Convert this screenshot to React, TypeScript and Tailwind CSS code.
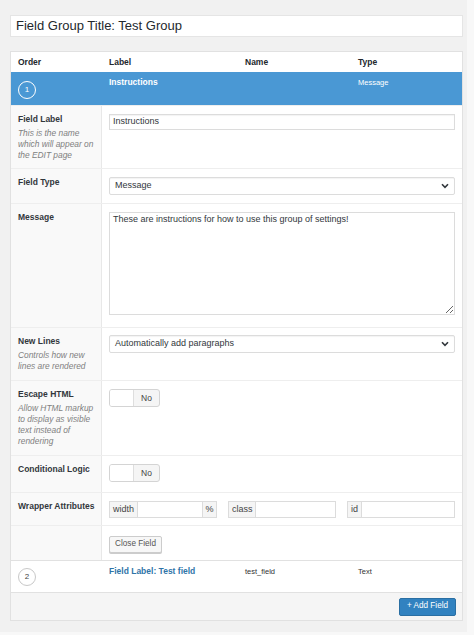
import React from "react";

const font = { fontFamily: '"Liberation Sans", Arial, sans-serif' };

function Chevron() {
  return (
    <svg width="8" height="6" viewBox="0 0 8 6" className="shrink-0">
      <path d="M1 1.2 L4 4.4 L7 1.2" fill="none" stroke="#32373c" strokeWidth="1.6" />
    </svg>
  );
}

function Select({ value }: { value: string }) {
  return (
    <div className="flex h-[18px] items-center justify-between rounded-[2px] border border-[#dcdcdc] bg-white pl-[5px] pr-[5px] text-[9px] text-[#32373c] shadow-[inset_0_1px_1px_rgba(0,0,0,0.05)]">
      <span>{value}</span>
      <Chevron />
    </div>
  );
}

function Toggle() {
  return (
    <div className="flex h-[18px] w-[51px] overflow-hidden rounded-[3px] border border-[#d4d4d4] bg-[#f5f5f5]">
      <div className="w-[24px] border-r border-[#dedede] bg-white" />
      <div className="flex flex-1 items-center justify-center text-[8.5px] text-[#444]">No</div>
    </div>
  );
}

function Row({
  label,
  desc,
  h,
  children,
}: {
  label?: string;
  desc?: string[];
  h: string;
  children: React.ReactNode;
}) {
  return (
    <div className={`flex border-t border-[#eeeeee] ${h}`}>
      <div className="w-[91px] shrink-0 border-r border-[#e8e8e8] bg-[#f9f9f9] pl-[7px] pt-[8px]">
        {label && <div className="text-[8.5px] font-bold leading-[11px] text-[#32373c]">{label}</div>}
        {desc && (
          <div className="mt-[3px] text-[8.4px] italic leading-[11px] text-[#808080]">
            {desc.map((d) => (
              <div key={d}>{d}</div>
            ))}
          </div>
        )}
      </div>
      <div className="flex-1 pl-[7px] pr-[7px] pt-[8px]">{children}</div>
    </div>
  );
}

function Prefixed({ prefix, suffix, pw }: { prefix: string; suffix?: string; pw: string }) {
  return (
    <div className="flex h-[17px] w-[108px] border border-[#dcdcdc] bg-white text-[9px] text-[#444]">
      <div className={`flex items-center bg-[#f5f5f5] pl-[3px] ${pw} border-r border-[#dcdcdc]`}>{prefix}</div>
      <div className="flex-1" />
      {suffix && (
        <div className="flex w-[14px] items-center justify-center border-l border-[#dcdcdc] bg-[#f5f5f5]">{suffix}</div>
      )}
    </div>
  );
}

export default function App() {
  return (
    <div className="h-[635px] w-[474px] bg-[#f8f8f8]" style={font}>
      <div className="h-[632px] w-[467px] bg-[#f1f1f1] pl-[10px] pr-[4px] pt-[15px]">
        <div className="flex h-[22px] items-center border border-[#e5e5e5] bg-white pl-[5px] text-[13px] text-[#23282d]">
          Field Group Title: Test Group
        </div>

        <div className="mt-[14px] border border-[#e1e1e1] bg-white">
          {/* header */}
          <div className="flex h-[20px] items-center text-[8.5px] font-bold text-[#23282d]">
            <div className="w-[98px] pl-[7px]">Order</div>
            <div className="w-[136px]">Label</div>
            <div className="w-[113px]">Name</div>
            <div>Type</div>
          </div>

          {/* open field header */}
          <div className="flex h-[33px] bg-[#4a98d4] text-white">
            <div className="w-[98px] pl-[7px] pt-[9px]">
              <div className="flex h-[18px] w-[18px] items-center justify-center rounded-full border border-white text-[8px]">
                1
              </div>
            </div>
            <div className="w-[136px] pt-[4px] text-[8.5px] font-bold">Instructions</div>
            <div className="w-[113px]" />
            <div className="pt-[5px] text-[7.5px]">Message</div>
          </div>

          <Row label="Field Label" desc={["This is the name", "which will appear on", "the EDIT page"]} h="h-[63px]">
            <div className="flex h-[16px] items-center border border-[#dcdcdc] bg-white pl-[3px] text-[9px] text-[#32373c] shadow-[inset_0_1px_1px_rgba(0,0,0,0.05)]">
              Instructions
            </div>
          </Row>

          <Row label="Field Type" h="h-[35px]">
            <Select value="Message" />
          </Row>

          <Row label="Message" h="h-[124px]">
            <textarea
              readOnly
              defaultValue="These are instructions for how to use this group of settings!"
              className="block h-[103px] w-full resize-y border border-[#dcdcdc] bg-white px-[3px] pt-[1px] text-[9px] leading-[10px] text-[#32373c] outline-none"
              style={font}
            />
          </Row>

          <Row label="New Lines" desc={["Controls how new", "lines are rendered"]} h="h-[53px]">
            <div className="-mt-[1px]">
              <Select value="Automatically add paragraphs" />
            </div>
          </Row>

          <Row
            label="Escape HTML"
            desc={["Allow HTML markup", "to display as visible", "text instead of", "rendering"]}
            h="h-[75px]"
          >
            <Toggle />
          </Row>

          <Row label="Conditional Logic" h="h-[37px]">
            <Toggle />
          </Row>

          <Row label="Wrapper Attributes" h="h-[33px]">
            <div className="flex justify-between">
              <Prefixed prefix="width" suffix="%" pw="w-[28px]" />
              <Prefixed prefix="class" pw="w-[27px]" />
              <Prefixed prefix="id" pw="w-[14px]" />
            </div>
          </Row>

          <Row h="h-[35px]">
            <div className="mt-[2px] flex h-[17px] w-[53px] items-center justify-center rounded-[2px] border border-[#cccccc] bg-[#f7f7f7] text-[8.2px] text-[#555] shadow-[0_1px_0_#cccccc]">
              Close Field
            </div>
          </Row>

          {/* field 2 */}
          <div className="flex h-[32px] border-t border-[#e1e1e1] bg-white">
            <div className="w-[98px] pl-[7px] pt-[7px]">
              <div className="flex h-[18px] w-[18px] items-center justify-center rounded-full border border-[#c8c8c8] text-[8px] text-[#444]">
                2
              </div>
            </div>
            <div className="w-[136px] pt-[4px] text-[8.5px] font-bold text-[#2f74a8]">Field Label: Test field</div>
            <div className="w-[113px] pt-[5px] text-[7.5px] text-[#333]">test_field</div>
            <div className="pt-[5px] text-[7.5px] text-[#333]">Text</div>
          </div>

          {/* footer */}
          <div className="flex h-[28px] items-center justify-end border-t border-[#e1e1e1] bg-[#f5f5f5] pr-[6px]">
            <div className="flex h-[18px] w-[57px] items-center justify-center rounded-[2px] border border-[#2a6fa3] bg-[#3182c0] text-[8.2px] text-white">
              + Add Field
            </div>
          </div>
        </div>
      </div>
    </div>
  );
}
